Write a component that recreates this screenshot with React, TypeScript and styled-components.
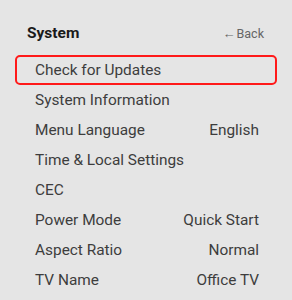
import styled, { createGlobalStyle } from 'styled-components';

const GlobalStyle = createGlobalStyle`
  html, body {
    margin: 0;
    padding: 0;
    background: #e5e5e5;
  }
  body {
    font-family: Roboto, 'Liberation Sans', sans-serif;
  }
`;

const items: { label: string; value?: string }[] = [
  { label: 'Check for Updates' },
  { label: 'System Information' },
  { label: 'Menu Language', value: 'English' },
  { label: 'Time & Local Settings' },
  { label: 'CEC' },
  { label: 'Power Mode', value: 'Quick Start' },
  { label: 'Aspect Ratio', value: 'Normal' },
  { label: 'TV Name', value: 'Office TV' },
];

export default function App() {
  return (
    <>
      <GlobalStyle />
      <PageSt>
        <HeaderSt>
          <TitleSt>System</TitleSt>
          <BackSt>
            <span className="arrow">←</span>Back
          </BackSt>
        </HeaderSt>
        <ListSt>
          {items.map((item, i) => (
            <RowSt key={item.label} $selected={i === 0}>
              <span>{item.label}</span>
              {item.value && <span>{item.value}</span>}
            </RowSt>
          ))}
        </ListSt>
      </PageSt>
    </>
  );
}

const PageSt = styled.div`
  width: 292px;
  height: 300px;
  padding-top: 23px;
  box-sizing: border-box;
`;
const HeaderSt = styled.div`
  display: flex;
  align-items: center;
  justify-content: space-between;
  padding: 0 28px 0 27px;
  height: 20px;
`;
const TitleSt = styled.h1`
  margin: 0;
  font-size: 15.5px;
  font-weight: 700;
  color: #1a1a1a;
`;
const BackSt = styled.div`
  font-size: 12.5px;
  color: #666;
  display: flex;
  align-items: center;

  .arrow {
    font-size: 13px;
    margin-right: 1px;
  }
`;
const ListSt = styled.ul`
  list-style: none;
  margin: 12px 15px 0;
  padding: 0;
`;
const RowSt = styled.li<{ $selected?: boolean }>`
  display: flex;
  align-items: center;
  justify-content: space-between;
  height: 30px;
  box-sizing: border-box;
  padding: 0 16px 0 18px;
  font-size: 15.4px;
  color: #3d3d3d;
  border: 2px solid ${({ $selected }) => ($selected ? '#ff1a1a' : 'transparent')};
  border-radius: 5px;
`;
